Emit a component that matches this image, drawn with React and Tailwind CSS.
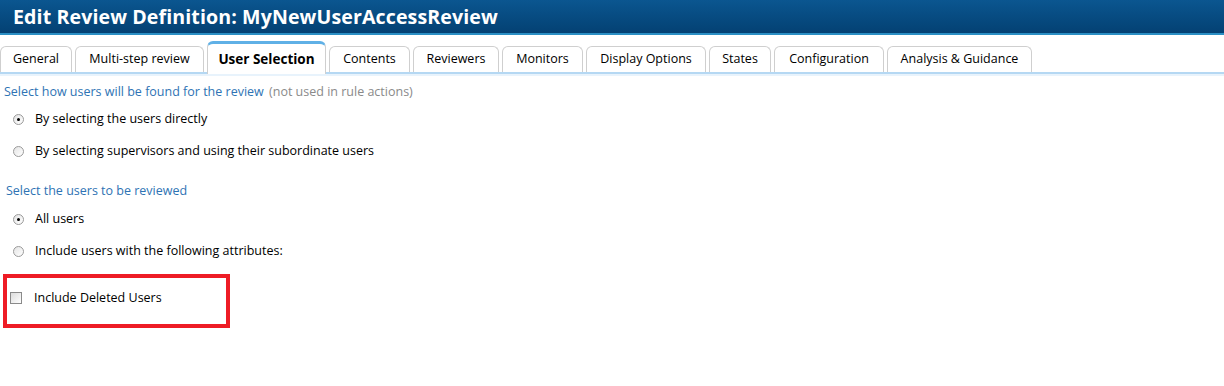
import React from 'react';

const tabs = [
    { label: 'General', w: 'w-[72px]' },
    { label: 'Multi-step review', w: 'w-[129px]' },
    { label: 'User Selection', w: 'w-[119px]', active: true },
    { label: 'Contents', w: 'w-[81px]' },
    { label: 'Reviewers', w: 'w-[86px]' },
    { label: 'Monitors', w: 'w-[81px]' },
    { label: 'Display Options', w: 'w-[120px]' },
    { label: 'States', w: 'w-[62px]' },
    { label: 'Configuration', w: 'w-[110px]' },
    { label: 'Analysis & Guidance', w: 'w-[145px]' },
];

const Radio = ({ checked }) => (
    <span className="relative inline-block w-[11px] h-[11px] rounded-full border border-[#9a9a9a] bg-gradient-to-br from-[#e4e4e4] to-white shrink-0">
        {checked && <span className="absolute left-[3px] top-[3px] w-[3px] h-[3px] rounded-full bg-black" />}
    </span>
);

const Option = ({ checked, children }) => (
    <div className="flex items-center h-[32px] pl-[13px]">
        <Radio checked={checked} />
        <span className="ml-[11px]">{children}</span>
    </div>
);

const App = () => {
    return (
        <div className="w-[1224px] h-[386px] bg-white text-[12.5px] text-black font-['Open_Sans',sans-serif] overflow-hidden">
            <div className="h-[35px] bg-gradient-to-b from-[#0b5690] to-[#044173] border-b-2 border-[#2b8fc4] flex items-center pl-[13px]">
                <h1 className="text-white text-[19.6px] font-bold tracking-[0.1px]">
                    Edit Review Definition: MyNewUserAccessReview
                </h1>
            </div>

            <div className="flex items-end gap-[3px] h-[39px] border-b-2 border-[#b5d8f3]">
                {tabs.map((tab) => (
                    tab.active ? (
                        <div
                            key={tab.label}
                            className={`${tab.w} h-[33px] -mb-[2px] flex items-center justify-center bg-white rounded-t-[6px] border border-b-0 border-[#cfcfcf] border-t-[3px] border-t-[#5fb0e6] font-bold text-[13.5px]`}
                        >
                            {tab.label}
                        </div>
                    ) : (
                        <div
                            key={tab.label}
                            className={`${tab.w} h-[26px] flex items-center justify-center bg-white rounded-t-[6px] border border-b-0 border-[#cfcfcf]`}
                        >
                            {tab.label}
                        </div>
                    )
                ))}
            </div>
            <div className="h-[2px] bg-[#e8f3fc]" />

            <div className="pt-[7px]">
                <p className="pl-[4px] text-[#2e73b4]">
                    Select how users will be found for the review <span className="text-[#8a8a8a] ml-[2px]">(not used in rule actions)</span>
                </p>
                <div className="mt-[2px]">
                    <Option checked>By selecting the users directly</Option>
                    <Option>By selecting supervisors and using their subordinate users</Option>
                </div>

                <p className="pl-[6px] mt-[14px] text-[#2e73b4]">Select the users to be reviewed</p>
                <div className="mt-[3px]">
                    <Option checked>All users</Option>
                    <Option>Include users with the following attributes:</Option>
                </div>

                <div className="ml-[3px] mt-[6px] w-[227px] h-[54px] border-[4px] border-[#ee1c25] flex items-start pt-[11px] pl-[3px]">
                    <span className="w-[12px] h-[12px] border border-[#8a8a8a] bg-gradient-to-br from-[#dcdcdc] to-white mt-[3px] shrink-0" />
                    <span className="ml-[12px]">Include Deleted Users</span>
                </div>
            </div>
        </div>
    );
};

export default App;
